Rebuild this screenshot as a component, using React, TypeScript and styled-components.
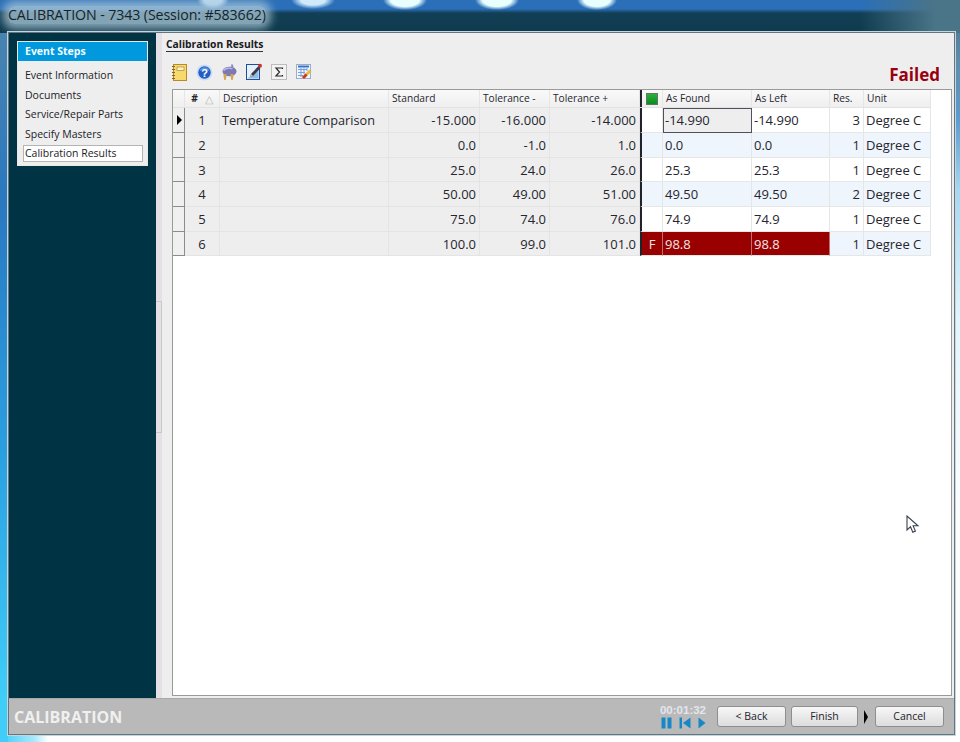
import styled, { createGlobalStyle } from 'styled-components';

const GlobalStyle = createGlobalStyle`
    html, body {
        margin: 0;
        padding: 0;
        background: #fff;
    }
    * {
        box-sizing: border-box;
    }
`;

const steps = ['Event Information', 'Documents', 'Service/Repair Parts', 'Specify Masters', 'Calibration Results'];

const readings = [
    { id: 1, description: 'Temperature Comparison', standard: '-15.000', minus: '-16.000', plus: '-14.000', found: '-14.990', left: '-14.990', res: 3 },
    { id: 2, description: '', standard: '0.0', minus: '-1.0', plus: '1.0', found: '0.0', left: '0.0', res: 1 },
    { id: 3, description: '', standard: '25.0', minus: '24.0', plus: '26.0', found: '25.3', left: '25.3', res: 1 },
    { id: 4, description: '', standard: '50.00', minus: '49.00', plus: '51.00', found: '49.50', left: '49.50', res: 2 },
    { id: 5, description: '', standard: '75.0', minus: '74.0', plus: '76.0', found: '74.9', left: '74.9', res: 1 },
    { id: 6, description: '', standard: '100.0', minus: '99.0', plus: '101.0', found: '98.8', left: '98.8', res: 1, failed: true },
];

const NotebookIcon = () => (
    <svg width="16" height="17" viewBox="0 0 16 17">
        <rect x="2.500" y="0.500" width="13" height="16" fill="#f8d96c" stroke="#b98a2c" />
        <rect x="6" y="3" width="7" height="3.500" fill="#fdf5c8" stroke="#ad8838" strokeWidth="0.700" />
        <path d="M1 2.500h3M1 5.500h3M1 8.500h3M1 11.500h3M1 14.500h3" stroke="#86642a" strokeWidth="1" />
    </svg>
);

const HelpIcon = () => (
    <svg width="17" height="17" viewBox="0 0 17 17">
        <circle cx="8.500" cy="8.500" r="8" fill="#cddcf4" />
        <circle cx="8.500" cy="8.500" r="6.200" fill="#1f5fc4" />
        <path d="M3.500 7a5.200 5.200 0 0 1 10 0c-3-1.500-7-1.500-10 0z" fill="#5c90e0" />
        <text x="8.500" y="12.600" textAnchor="middle" fontSize="11" fontWeight="700" fontFamily="Liberation Sans, sans-serif" fill="#fff">?</text>
    </svg>
);

const PlugIcon = () => (
    <svg width="16" height="17" viewBox="0 0 16 17">
        <path d="M10 0.500h2l0.500 3-2 0.500z" fill="#8d8cc0" />
        <ellipse cx="8.500" cy="7.500" rx="7" ry="4.800" fill="#7c7ab6" />
        <path d="M2.500 6.500c2-2.500 6-3 9-1.500" stroke="#bcbbe4" strokeWidth="1.300" fill="none" />
        <path d="M2.500 10h3v2l-0.800 4h-1.400l-0.800-4zM9.500 10h3v2l-0.800 4h-1.400l-0.800-4z" fill="#d4a64c" />
    </svg>
);

const EditIcon = () => (
    <svg width="17" height="18" viewBox="1 0 17 18">
        <rect x="1.500" y="1.500" width="13" height="15" fill="#e6f0fb" stroke="#1c4f9c" />
        <path d="M2.500 15.500L13.500 6v9.500z" fill="#8fbce8" />
        <path d="M5 14l1-3 7.500-8 2 2-7.500 8z" fill="#3b3b4a" />
        <circle cx="15" cy="2.800" r="2" fill="#c8352c" />
        <path d="M5 14l1-3 2 2z" fill="#e9c68a" />
    </svg>
);

const SigmaIcon = () => (
    <svg width="16" height="16" viewBox="0 0 16 16">
        <rect x="0.500" y="0.500" width="15" height="15" fill="#f3f3f3" stroke="#bcbcbc" />
        <path d="M11.500 5V4H5L8.500 8 5 12h6.500v-1" fill="none" stroke="#2a2a2a" strokeWidth="1.200" />
    </svg>
);

const GridEditIcon = () => (
    <svg width="16" height="16" viewBox="0 0 16 16">
        <rect x="0.500" y="0.500" width="14" height="14" fill="#f2f6fc" stroke="#98aecd" />
        <path d="M2 2.500h11" stroke="#3a70c8" strokeWidth="2" />
        <path d="M2 5.500h9M2 8.500h7M2 11.500h5M5 4v9M8 4v6M11 4v3" stroke="#7aa0dc" strokeWidth="1" />
        <path d="M6 13l7.500-7.500 2 2L8 15z" fill="#e8b93a" />
        <path d="M6 13l3.500-3.500 2 2L8 15z" fill="#c9372d" />
    </svg>
);

const App = () => {
    return (
        <>
            <GlobalStyle />
            <Desktop>
                <TitleBar>
                    <TitleText>CALIBRATION - 7343 (Session: #583662)</TitleText>
                </TitleBar>
                <Frame>
                    <Body>
                        <Sidebar>
                            <StepsPanel>
                                <StepsHeader>Event Steps</StepsHeader>
                                <StepList>
                                    {steps.map((step, index) => (
                                        <Step key={step} $active={index === steps.length - 1}>
                                            {step}
                                        </Step>
                                    ))}
                                </StepList>
                            </StepsPanel>
                        </Sidebar>
                        <Splitter>
                            <SplitterGrip />
                        </Splitter>
                        <Main>
                            <SectionTitle>Calibration Results</SectionTitle>
                            <ToolRow>
                                <Tools>
                                    <Tool><NotebookIcon /></Tool>
                                    <Tool><HelpIcon /></Tool>
                                    <Tool><PlugIcon /></Tool>
                                    <Tool><EditIcon /></Tool>
                                    <Tool><SigmaIcon /></Tool>
                                    <Tool><GridEditIcon /></Tool>
                                </Tools>
                                <Status>Failed</Status>
                            </ToolRow>
                            <GridBox>
                                <HeaderRow>
                                    <HeadCell />
                                    <HeadCell $center>
                                        <strong>#</strong> <SortMark>△</SortMark>
                                    </HeadCell>
                                    <HeadCell>Description</HeadCell>
                                    <HeadCell>Standard</HeadCell>
                                    <HeadCell>Tolerance -</HeadCell>
                                    <HeadCell>Tolerance +</HeadCell>
                                    <HeadCell $divider $center>
                                        <GreenFlag />
                                    </HeadCell>
                                    <HeadCell>As Found</HeadCell>
                                    <HeadCell>As Left</HeadCell>
                                    <HeadCell>Res.</HeadCell>
                                    <HeadCell>Unit</HeadCell>
                                </HeaderRow>
                                {readings.map((row) => (
                                    <DataRow key={row.id} $short={row.id % 3 === 0}>
                                        <Indicator>{row.id === 1 && <Arrow />}</Indicator>
                                        <FixedCell $center>{row.id}</FixedCell>
                                        <DescriptionCell>{row.description}</DescriptionCell>
                                        <FixedCell $right>{row.standard}</FixedCell>
                                        <FixedCell $right>{row.minus}</FixedCell>
                                        <FixedCell $right>{row.plus}</FixedCell>
                                        <EntryCell $even={row.id % 2 === 0} $failed={row.failed} $flag>
                                            {row.failed ? 'F' : ''}
                                        </EntryCell>
                                        <EntryCell $even={row.id % 2 === 0} $failed={row.failed} $focused={row.id === 1}>
                                            {row.found}
                                        </EntryCell>
                                        <EntryCell $even={row.id % 2 === 0} $failed={row.failed}>
                                            {row.left}
                                        </EntryCell>
                                        <EntryCell $even={row.id % 2 === 0} $right>
                                            {row.res}
                                        </EntryCell>
                                        <EntryCell $even={row.id % 2 === 0}>Degree C</EntryCell>
                                    </DataRow>
                                ))}
                                <Pointer width="14" height="20" viewBox="0 0 14 20">
                                    <path
                                        d="M1 1v14l3.500-3.200 2.300 5.400 2.600-1.100-2.300-5.300H12z"
                                        fill="#fff"
                                        stroke="#39424e"
                                        strokeWidth="1.100"
                                    />
                                </Pointer>
                            </GridBox>
                        </Main>
                    </Body>
                    <BottomBar>
                        <BrandName>CALIBRATION</BrandName>
                        <Timer>
                            <Elapsed>00:01:32</Elapsed>
                            <TimerControls>
                                <svg width="11" height="12" viewBox="0 0 11 12">
                                    <path d="M0.500 0.500h4v11h-4zM6.500 0.500h4v11h-4z" fill="#1688c8" />
                                </svg>
                                <svg width="12" height="12" viewBox="0 0 12 12">
                                    <path d="M0.500 0.500h2.500v11H0.500zM11.500 0.500v11L4 6z" fill="#1688c8" />
                                </svg>
                                <svg width="8" height="12" viewBox="0 0 8 12">
                                    <path d="M0.500 0.500v11L7.500 6z" fill="#1688c8" />
                                </svg>
                            </TimerControls>
                        </Timer>
                        <NavButton>&lt; Back</NavButton>
                        <NavButton $narrow>Finish</NavButton>
                        <NextMark />
                        <NavButton>Cancel</NavButton>
                    </BottomBar>
                </Frame>
            </Desktop>
        </>
    );
};

export default App;

const Desktop = styled.div`
    width: 960px;
    height: 742px;
    overflow: hidden;
    display: flex;
    flex-direction: column;
    padding: 0 5px 7px 8px;
    background:
        radial-gradient(ellipse 22px 10px at 405px 0, #e8feff 65%, transparent 100%) 0 0 / 100% 11px no-repeat,
        radial-gradient(ellipse 22px 10px at 497px 0, #e8feff 65%, transparent 100%) 0 0 / 100% 11px no-repeat,
        radial-gradient(ellipse 20px 10px at 597px 0, #e8feff 65%, transparent 100%) 0 0 / 100% 11px no-repeat,
        radial-gradient(ellipse 16px 9px at 213px 0, #b8dcf4 55%, transparent 100%) 0 0 / 100% 11px no-repeat,
        radial-gradient(ellipse 22px 9px at 313px 0, #cfeafa 55%, transparent 100%) 0 0 / 100% 11px no-repeat,
        linear-gradient(90deg, transparent 860px, #4a7488 935px) 0 0 / 100% 33px no-repeat,
        linear-gradient(180deg, #2b6fb8 0, #2b6fb8 9px, #123f55 13px, #0e3a4e 33px) 0 0 / 100% 33px no-repeat,
        linear-gradient(180deg, #45708a 0, #5d8dac 60px, #5c9cd0 120px, #a6d8f2 190px, #e2f6fd 320px, #ffffff 520px) right top / 5px 100% no-repeat,
        linear-gradient(180deg, #4f86ac 0, #2a78c0 200px, #2a9fe0 450px, #40cdf8 700px) left top / 8px 100% no-repeat,
        linear-gradient(90deg, #40cdf8 0, #a8e8fb 34px, #ffffff 48px) left bottom / 100% 7px no-repeat,
        #ffffff;
`;

const TitleBar = styled.div`
    height: 32px;
    flex: none;
    padding-top: 6px;
`;

const TitleText = styled.span`
    display: inline-block;
    font: 14.2px/18px 'Open Sans', 'Noto Sans', sans-serif;
    color: #14242e;
    letter-spacing: -0.1px;
    background: rgba(176, 204, 218, 0.72);
    box-shadow: 0 0 8px 5px rgba(176, 204, 218, 0.72);
    border-radius: 6px;
`;

const Frame = styled.div`
    flex: 1;
    min-height: 0;
    display: flex;
    flex-direction: column;
    border: 1px solid #64757d;
    outline: 1px solid #c4d6de;
    background: #eeeeee;
`;

const Body = styled.div`
    flex: 1;
    min-height: 0;
    display: flex;
`;

const Sidebar = styled.div`
    width: 147px;
    flex: none;
    padding: 8px 8px 0 8px;
    background: #003344;
`;

const StepsPanel = styled.div`
    background: #eeeeee;
    border: 1px solid #e8e8e8;
    height: 125px;
`;

const StepsHeader = styled.div`
    height: 19px;
    background: #0099dd;
    color: #f4fbff;
    padding-left: 7px;
    font: 700 10.5px/18px 'Open Sans', 'Noto Sans', sans-serif;
`;

const StepList = styled.div`
    display: flex;
    flex-direction: column;
    padding: 5px 4px 0 5px;
`;

const Step = styled.div<{ $active?: boolean }>`
    height: ${(p) => (p.$active ? '17px' : '19.7px')};
    padding-left: 2px;
    font: 10.5px/19px 'Open Sans', 'Noto Sans', sans-serif;
    color: #1c1c28;
    ${(p) =>
        p.$active &&
        `
        background: #fff;
        border: 1px solid #b4b4b4;
        padding-left: 1px;
        line-height: 15px;
    `}
`;

const Splitter = styled.div`
    width: 6px;
    flex: none;
    padding-top: 268px;
    background: #e4e0e6;
`;

const SplitterGrip = styled.div`
    width: 6px;
    height: 132px;
    border: 1px solid #c9c9c9;
    border-left: none;
`;

const Main = styled.div`
    flex: 1;
    min-width: 0;
    display: flex;
    flex-direction: column;
    padding: 4px 2px 2px 10px;
`;

const SectionTitle = styled.div`
    align-self: flex-start;
    margin-left: -6px;
    font: 700 10.3px/14px 'Open Sans', 'Noto Sans', sans-serif;
    color: #1a1a24;
    border-bottom: 1px solid #30303a;
`;

const ToolRow = styled.div`
    height: 37px;
    flex: none;
    display: flex;
    align-items: flex-start;
    justify-content: space-between;
    padding: 11px 12px 0 0;
`;

const Tools = styled.div`
    display: flex;
    align-items: center;
    gap: 7px;
    margin-left: -2px;
`;

const Tool = styled.span`
    display: flex;
    width: 18px;
    height: 18px;
    align-items: center;
    justify-content: center;
`;

const Status = styled.div`
    margin-top: 2px;
    font: 700 17px/20px 'Open Sans', 'Noto Sans', sans-serif;
    color: #99000f;
`;

const GridBox = styled.div`
    position: relative;
    flex: 1;
    min-height: 0;
    background: #fff;
    border: 1px solid #9a9a9a;
`;

const columns = '12px 35px 169px 91px 70px 90px 23px 89px 78px 34px 67px';

const HeaderRow = styled.div`
    display: grid;
    grid-template-columns: ${columns};
    height: 18px;
    width: 758px;
    background: linear-gradient(180deg, #f9f9f9, #efefef);
    border-bottom: 1px solid #e2e2e2;
`;

const HeadCell = styled.div<{ $center?: boolean; $divider?: boolean }>`
    display: flex;
    align-items: center;
    justify-content: ${(p) => (p.$center ? 'center' : 'flex-start')};
    gap: 4px;
    padding: 0 ${(p) => (p.$center ? '0' : '3px')};
    font: 10.2px/17px 'Open Sans', 'Noto Sans', sans-serif;
    color: #26262e;
    border-right: 1px solid #e6e6e6;
    ${(p) => p.$divider && 'border-left: 2px solid #22222a;'}
`;

const SortMark = styled.span`
    color: #b8b8b8;
    font-size: 11px;
    margin-left: 3px;
`;

const GreenFlag = styled.span`
    display: block;
    width: 12px;
    height: 12px;
    background: linear-gradient(180deg, #2cb040, #0b8a1e);
    border: 1px solid #5d7a60;
`;

const DataRow = styled.div<{ $short?: boolean }>`
    display: grid;
    grid-template-columns: ${columns};
    grid-template-rows: minmax(0, 1fr);
    height: ${(p) => (p.$short ? '24px' : '25px')};
    width: 758px;
`;

const Indicator = styled.div`
    display: flex;
    align-items: center;
    padding-left: 4px;
    background: #f0f0f0;
    border-right: 1px solid #8c8c8c;
    border-bottom: 1px solid #8c8c8c;
`;

const Arrow = styled.span`
    width: 0;
    height: 0;
    border-left: 5px solid #000;
    border-top: 5px solid transparent;
    border-bottom: 5px solid transparent;
`;

const FixedCell = styled.div<{ $center?: boolean; $right?: boolean }>`
    overflow: hidden;
    padding: 0 3px;
    text-align: ${(p) => (p.$center ? 'center' : p.$right ? 'right' : 'left')};
    font: 13px/25px 'Open Sans', 'Noto Sans', sans-serif;
    color: #26262e;
    background: #eeeeee;
    border-right: 1px solid #e4e4e4;
    border-bottom: 1px solid #e4e4e4;
    white-space: nowrap;
`;

const DescriptionCell = styled(FixedCell)`
    padding-left: 2px;
    font-size: 12.7px;
`;

const EntryCell = styled.div<{
    $even?: boolean;
    $failed?: boolean;
    $right?: boolean;
    $flag?: boolean;
    $focused?: boolean;
}>`
    overflow: hidden;
    padding: 0 3px 0 ${(p) => (p.$flag ? '3px' : '2px')};
    text-align: ${(p) => (p.$flag ? 'center' : p.$right ? 'right' : 'left')};
    font: 13px/25px 'Open Sans', 'Noto Sans', sans-serif;
    color: ${(p) => (p.$failed ? '#f4e6e6' : '#26262e')};
    background: ${(p) => (p.$failed ? '#990000' : p.$even ? '#eef5fc' : '#ffffff')};
    border-right: 1px solid ${(p) => (p.$failed ? '#c07070' : '#e6e6e6')};
    border-bottom: 1px solid #e6e6e6;
    white-space: nowrap;
    ${(p) => p.$flag && 'border-left: 2px solid #22222a;'}
    ${(p) =>
        p.$focused &&
        `
        background: #eeeeee;
        border: 1px solid #50505a;
        padding: 0 1px;
        line-height: 23px;
    `}
`;

const Pointer = styled.svg`
    position: absolute;
    left: 733px;
    top: 425px;
`;

const BottomBar = styled.div`
    height: 36px;
    flex: none;
    display: flex;
    align-items: center;
    padding: 0 10px 0 5px;
    background: #b9b9b9;
    border-top: 1px solid #a8a8a8;
`;

const BrandName = styled.div`
    flex: 1;
    font: 700 16px/18px 'Open Sans', 'Noto Sans', sans-serif;
    color: #f0f0f0;
`;

const Timer = styled.div`
    width: 56px;
    display: flex;
    flex-direction: column;
    align-items: center;
    margin-right: 6px;
`;

const Elapsed = styled.div`
    font: 700 11.5px/13px 'Liberation Sans', sans-serif;
    color: #e2e6ee;
`;

const TimerControls = styled.div`
    display: flex;
    align-items: center;
    gap: 7px;
    height: 13px;
`;

const NavButton = styled.div<{ $narrow?: boolean }>`
    width: ${(p) => (p.$narrow ? '67px' : '69px')};
    height: 21px;
    margin-right: ${(p) => (p.$narrow ? '0' : '5px')};
    border: 1px solid #8e8e8e;
    border-radius: 3px;
    background: linear-gradient(180deg, #f7f7f7, #dcdcdc);
    text-align: center;
    font: 10.5px/19px 'Open Sans', 'Noto Sans', sans-serif;
    color: #22222a;
    &:last-child {
        margin-right: 0;
    }
`;

const NextMark = styled.span`
    width: 0;
    height: 0;
    margin: 0 7px 0 6px;
    border-left: 4px solid #000;
    border-top: 7px solid transparent;
    border-bottom: 7px solid transparent;
`;
